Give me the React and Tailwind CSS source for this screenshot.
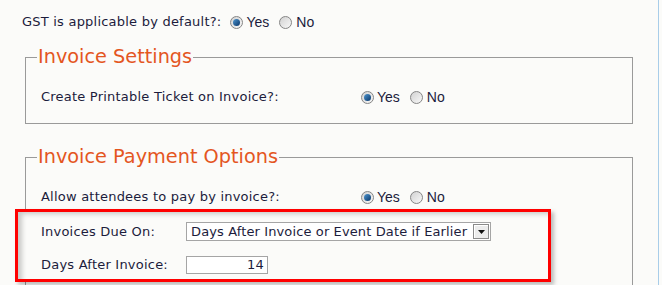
const FONT = "font-['DejaVu_Sans',Verdana,sans-serif]";
const ARIAL = "font-['Liberation_Sans',Arial,sans-serif]";

function Radio({ checked }) {
  return (
    <span className="w-[13px] h-[13px] rounded-full border border-[#858585] bg-gradient-to-br from-[#d2d2d2] to-[#f8f8f8] flex items-center justify-center shrink-0">
      {checked && <span className="w-[7px] h-[7px] rounded-full bg-gradient-to-br from-[#4f97d0] to-[#08366a]" />}
    </span>
  );
}

function YesNo({ value = 'yes' }) {
  return (
    <div className={`flex items-center text-[14px] tracking-normal text-[#1c1c3c] ${ARIAL}`}>
      <Radio checked={value === 'yes'} />
      <span className="ml-[3px]">Yes</span>
      <span className="ml-[10px]"><Radio checked={value === 'no'} /></span>
      <span className="ml-[4px]">No</span>
    </div>
  );
}

export default function App() {
  return (
    <div className={`w-[662px] h-[285px] bg-[#fbfbf9] overflow-hidden text-[13px] tracking-[0.22px] text-[#1c1c3c] ${FONT}`}>
      <div className="w-[659px] h-full border-r border-[#a8cde9]">
        <div className="pt-[13px] pl-[22px] h-[31px] flex items-center gap-[9px]">
          <span className="leading-[18px]">GST is applicable by default?:</span>
          <YesNo />
        </div>

        <fieldset className="ml-[25px] mt-[15px] w-[608px] border border-[#9a9a9a] px-[11px] pb-[17px]">
          <legend className="px-[1px] text-[19.3px] tracking-normal leading-[22px] text-[#e4561f]">Invoice Settings</legend>
          <div className="pt-[20px] pl-[4px] flex items-center h-[38px]">
            <span className="w-[320px] leading-[18px]">Create Printable Ticket on Invoice?:</span>
            <YesNo />
          </div>
        </fieldset>

        <fieldset className="ml-[25px] mt-[22px] w-[608px] h-[200px] border border-[#9a9a9a] px-[11px]">
          <legend className="px-[1px] text-[19.3px] tracking-normal leading-[22px] text-[#e4561f]">Invoice Payment Options</legend>
          <div className="pt-[20px] pl-[4px] flex items-center h-[38px]">
            <span className="w-[320px] leading-[18px]">Allow attendees to pay by invoice?:</span>
            <YesNo />
          </div>
          <div className="mt-[3px] ml-[-22px] w-[536px] h-[73px] border-[3px] border-[#ff0000] shadow-[3px_3px_4px_rgba(0,0,0,0.25)] bg-[#fbfbf9]">
            <div className="h-full pl-[23px] pt-[10px] shadow-[inset_6px_4px_5px_-2px_rgba(0,0,0,0.2)] flex flex-col gap-[15px]">
              <div className="flex items-center h-[19px]">
                <span className="w-[145px]">Invoices Due On:</span>
                <div className="w-[305px] h-[19px] border border-[#a5a5a5] bg-white flex items-center justify-between pl-[4px] pr-[1px]">
                  <span className="leading-[17px] tracking-[0.12px]">Days After Invoice or Event Date if Earlier</span>
                  <span className="w-[16px] h-[15px] bg-[#ececec] border border-[#8a8a8a] shadow-[inset_1px_1px_0_#fff] flex items-center justify-center">
                    <svg width="7" height="4" viewBox="0 0 7 4"><path d="M0 0h7L3.5 4z" fill="#111" /></svg>
                  </span>
                </div>
              </div>
              <div className="flex items-center h-[18px]">
                <span className="w-[145px]">Days After Invoice:</span>
                <div className="w-[82px] h-[18px] border border-[#a5a5a5] bg-white text-right pr-[3px] leading-[16px]">14</div>
              </div>
            </div>
          </div>
        </fieldset>
      </div>
    </div>
  );
}
